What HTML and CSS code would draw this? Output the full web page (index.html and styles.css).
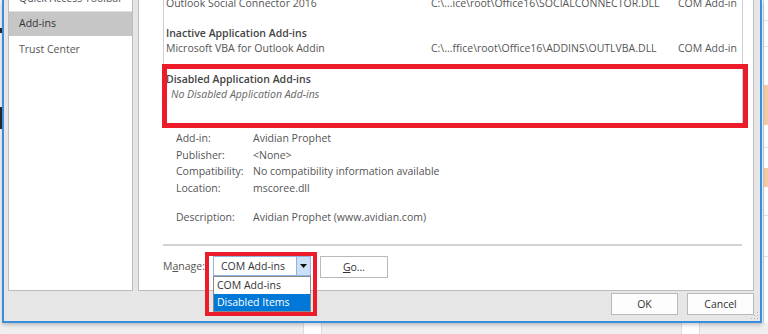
FILE: index.html
```html
<!DOCTYPE html>
<html lang="en">
<head>
<meta charset="utf-8">
<title>Outlook Options - Add-ins</title>
<link rel="stylesheet" href="styles.css">
</head>
<body>
<div class="desk">
  <div class="edge-left">
    <span class="mark m1"></span>
    <span class="mark m2"></span>
  </div>
  <div class="dialog">
    <div class="body">
      <nav class="nav">
        <div class="nav-item cut">Quick Access Toolbar</div>
        <div class="nav-item active">Add-ins</div>
        <div class="nav-item">Trust Center</div>
      </nav>
      <main class="main">
        <div class="list">
          <div class="list-inner">
            <div class="row"><span>Outlook Social Connector 2016</span><span>C:\...ice\root\Office16\SOCIALCONNECTOR.DLL</span><span>COM Add-in</span></div>
            <div class="gap"></div>
            <div class="row head"><span>Inactive Application Add-ins</span></div>
            <div class="row"><span>Microsoft VBA for Outlook Addin</span><span>C:\...ffice\root\Office16\ADDINS\OUTLVBA.DLL</span><span>COM Add-in</span></div>
            <div class="gap gap2"></div>
            <div class="row head"><span>Disabled Application Add-ins</span></div>
            <div class="row none"><span>No Disabled Application Add-ins</span></div>
          </div>
        </div>
        <div class="redbox redbox-list"></div>

        <div class="details">
          <span>Add-in:</span><span>Avidian Prophet</span>
          <span>Publisher:</span><span>&lt;None&gt;</span>
          <span>Compatibility:</span><span>No compatibility information available</span>
          <span>Location:</span><span>mscoree.dll</span>
          <span class="desc">Description:</span><span class="desc">Avidian Prophet (www.avidian.com)</span>
        </div>

        <div class="sep"></div>

        <div class="manage">
          <span class="manage-label">M<u>a</u>nage:</span>
          <div class="combo">
            <span class="combo-text">COM Add-ins</span>
            <span class="combo-btn"><svg width="7" height="4" viewBox="0 0 7 4"><path d="M0 0h7L3.5 4z" fill="#111"/></svg></span>
            <div class="popup">
              <div class="opt">COM Add-ins</div>
              <div class="opt sel">Disabled Items</div>
            </div>
          </div>
          <button class="btn go"><u>G</u>o...</button>
        </div>
        <div class="redbox redbox-manage"></div>
      </main>
    </div>
    <footer class="footer">
      <button class="btn">OK</button>
      <button class="btn">Cancel</button>
      <svg class="grip" width="8" height="8" viewBox="0 0 8 8">
        <rect x="6" y="0" width="1" height="1" fill="#b5b5b5"/>
        <rect x="3" y="3" width="1" height="1" fill="#b5b5b5"/>
        <rect x="6" y="3" width="1" height="1" fill="#b5b5b5"/>
        <rect x="0" y="6" width="1" height="1" fill="#b5b5b5"/>
        <rect x="3" y="6" width="1" height="1" fill="#b5b5b5"/>
        <rect x="6" y="6" width="1" height="1" fill="#b5b5b5"/>
      </svg>
    </footer>
  </div>
  <div class="edge-right">
    <div class="vline"></div>
    <div class="stripes">
      <div class="st l1"></div>
      <div class="st l2"></div>
      <div class="st orange o1"></div>
      <div class="st l3"></div>
      <div class="st orange o2"></div>
      <div class="st l4"></div>
      <div class="st l5"></div>
    </div>
  </div>
</div>
<div class="ground">
  <div class="patch p1"></div>
  <div class="patch p2"></div>
</div>
</body>
</html>
```
FILE: styles.css
```css
* { box-sizing: border-box; margin: 0; padding: 0; }
html, body { width: 768px; height: 334px; overflow: hidden; }
body {
  background: #efefef;
  font-family: "Open Sans", "Noto Sans", sans-serif;
  font-size: 10.5px;
  color: #444;
}
u { text-decoration: underline; text-underline-offset: 1px; }

.desk { display: flex; height: 323px; }

/* outside, left */
.edge-left {
  width: 2px;
  background: #f3f5f7;
  display: flex;
  flex-direction: column;
}
.mark { display: block; width: 2px; background: #2a2a2a; }
.m1 { margin-top: 28px; height: 5px; }
.m2 { margin-top: 74px; height: 22px; }

/* dialog */
.dialog {
  width: 760px;
  display: flex;
  flex-direction: column;
  background: #e6e6e6;
  border: 2px solid #3b8edb;
  border-top: 0;
  box-shadow: 0 2px 4px rgba(0, 0, 0, 0.22);
  position: relative;
  z-index: 1;
}
.body {
  display: flex;
  gap: 5px;
  padding: 0 6px 0 4px;
  height: 291px;
}

/* left navigation */
.nav {
  width: 125px;
  background: #fff;
  border: 1px solid #bcbcbc;
  border-top: 0;
  overflow: hidden;
}
.nav-item {
  height: 25px;
  line-height: 25px;
  padding-left: 10px;
  color: #555;
  white-space: nowrap;
}
.nav-item.cut { margin-top: -14px; }
.nav-item.active {
  background: #c6c6c6;
  color: #333;
  box-shadow: inset 0 1px 0 #dedede;
}
.nav-item.active + .nav-item { line-height: 26px; }

/* main panel */
.main {
  flex: 1;
  background: #fff;
  border: 1px solid #bcbcbc;
  border-top: 0;
  position: relative;
  padding: 0 10px 0 24px;
  display: flex;
  flex-direction: column;
}
.list {
  height: 125px;
  border-left: 1px solid #cfcfcf;
  border-right: 1px solid #cfcfcf;
  border-bottom: 1px solid #cfcfcf;
  overflow: hidden;
  padding-left: 2px;
  line-height: 15px;
  flex-shrink: 0;
}
.list-inner { margin-top: -4.5px; }
.row {
  display: grid;
  grid-template-columns: 265px 247px 1fr;
  white-space: nowrap;
  color: #555;
}
.gap { height: 15px; }
.gap2 { height: 16px; }
.row.head { font-weight: 600; color: #444; }
.row.none { font-style: italic; padding-left: 5px; color: #666; }

.redbox {
  position: absolute;
  border: 5px solid #ec1c2a;
  pointer-events: none;
  z-index: 3;
}
.redbox-list { left: 23px; top: 64px; width: 586px; height: 64px; }
.redbox-manage { left: 66px; top: 252px; width: 112px; height: 64px; border-width: 4px; }

.details {
  margin-top: 5px;
  padding-left: 13px;
  display: grid;
  grid-template-columns: 77px 1fr;
  line-height: 16.5px;
  color: #555;
  white-space: nowrap;
}
.details .desc { margin-top: 13px; }

.sep {
  margin-top: 18.5px;
  height: 2px;
  background: #d2d2d2;
  margin-right: 1px;
  flex-shrink: 0;
}

.manage {
  margin-top: 10px;
  display: flex;
  align-items: flex-start;
}
.manage-label {
  width: 50px;
  line-height: 21px;
  color: #555;
  white-space: nowrap;
}
.combo {
  position: relative;
  width: 98px;
  height: 20px;
  border: 1px solid #8db6e2;
  background: #fff;
  display: flex;
}
.combo-text {
  flex: 1;
  padding-left: 7px;
  line-height: 19px;
  color: #333;
  white-space: nowrap;
}
.combo-btn {
  width: 14px;
  background: #cce0f5;
  border-left: 1px solid #8db6e2;
  display: flex;
  align-items: center;
  justify-content: center;
}
.popup {
  position: absolute;
  left: -1px;
  top: 19px;
  width: 98px;
  height: 36px;
  background: #fff;
  border: 1px solid #8a8a8a;
  z-index: 2;
}
.opt {
  height: 17px;
  line-height: 17px;
  padding-left: 3px;
  color: #333;
  white-space: nowrap;
}
.opt.sel { background: #0078d7; color: #fff; }

.btn {
  font-family: inherit;
  font-size: 10.5px;
  color: #333;
  background: #fdfdfd;
  border: 1px solid #b9b9b9;
  height: 22px;
  width: 67px;
}
.btn.go { margin-left: 9px; width: 68px; background: #fff; }

.footer {
  height: 30px;
  display: flex;
  justify-content: flex-end;
  align-items: flex-start;
  gap: 9px;
  padding: 2px 6px 0 0;
  position: relative;
}
.grip { position: absolute; right: 1px; bottom: 1px; }

/* outside, right */
.edge-right {
  width: 6px;
  background: #fff;
  display: flex;
}
.vline { width: 1px; margin-left: 1px; background: #b8d3ec; }
.stripes { flex: 1; display: flex; flex-direction: column; }
.st { height: 1px; background: #e2e2e2; }
.l1 { margin-top: 20px; }
.l2 { margin-top: 25px; }
.orange { background: #f6c9a1; }
.o1 { margin-top: 38px; height: 40px; }
.l3 { margin-top: 22px; }
.o2 { margin-top: 20px; height: 19px; }
.l4 { margin-top: 28px; }
.l5 { margin-top: 40px; }

/* ground below the dialog */
.ground {
  height: 11px;
  display: flex;
  background: #efefef;
}
.patch { height: 11px; background: #fff; border-left: 1px solid #dadada; border-right: 1px solid #dadada; }
.p1 { margin-left: 303px; width: 19px; }
.p2 { margin-left: 359px; width: 19px; }
```
